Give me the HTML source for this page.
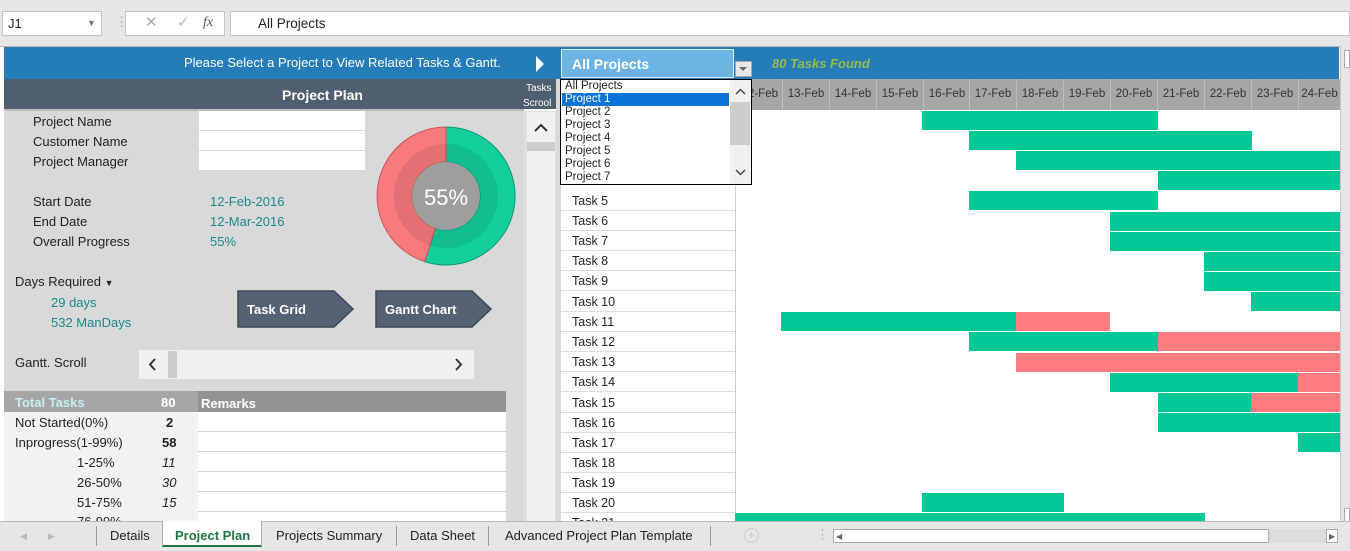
<!DOCTYPE html>
<html><head><meta charset="utf-8"><style>
*{margin:0;padding:0;box-sizing:border-box}
body{width:1350px;height:551px;overflow:hidden;background:#e6e6e6;font-family:"Liberation Sans",sans-serif;font-size:13px;color:#222;position:relative}
.a{position:absolute}
.t{position:absolute;white-space:nowrap;line-height:14px}
.row{position:absolute;left:561px;width:174px;height:20px;border-bottom:1px solid #dcdcdc;background:#fff;padding-left:11px;line-height:21px;font-size:12.5px}
.bar{position:absolute;height:19px}
.g{background:#00c896}.r{background:#ff7c80}
.dh{position:absolute;top:79px;height:31px;width:47px;border-left:1px solid #bdbdbd;line-height:31px;text-align:center;font-size:11.5px;color:#333;background:#a6a6a6}
.lbl{position:absolute;left:33px;font-size:13px}
.val{position:absolute;left:210px;color:#1a8a8a;font-size:13px}
.rm{position:absolute;left:198px;width:308px;height:20px;background:#fff;border-bottom:1px solid #d4d4d4}
.dd{position:absolute;left:5px;font-size:11.5px;line-height:13px}
</style></head><body>
<div class="a" style="left:0;top:0;width:1350px;height:46px;background:#e6e6e6"></div>
<div class="a" style="left:2px;top:11px;width:100px;height:25px;background:#fff;border:1px solid #c6c6c6"></div>
<div class="t" style="left:8px;top:17px;font-size:13px">J1</div>
<div class="t" style="left:87px;top:16px;font-size:9px;color:#777">▼</div>
<div class="t" style="left:115px;top:15px;color:#aaa">⋮</div>
<div class="a" style="left:125px;top:11px;width:100px;height:25px;background:#fff;border:1px solid #c6c6c6"></div>
<div class="t" style="left:145px;top:16px;color:#aaa;font-size:15px">✕</div>
<div class="t" style="left:177px;top:16px;color:#bbb;font-size:15px">✓</div>
<div class="t" style="left:203px;top:16px;color:#555;font-style:italic;font-family:'Liberation Serif',serif;font-size:14px">fx</div>
<div class="a" style="left:230px;top:11px;width:1120px;height:25px;background:#fff;border:1px solid #c6c6c6"></div>
<div class="t" style="left:258px;top:17px;font-size:13.5px">All Projects</div>
<div class="a" style="left:0;top:46px;width:1340px;height:475px;background:#fff;border-top:1px solid #b8b8b8"></div>
<div class="a" style="left:4px;top:47px;width:1335px;height:32px;background:#247cb8"></div>
<div class="t" style="left:184px;top:56px;color:#fff;font-size:13px">Please Select a Project to View Related Tasks &amp; Gantt.</div>
<svg class="a" style="left:535px;top:55px" width="10" height="18"><path d="M1 1L9 9L1 17Z" fill="#fff"/></svg>
<div class="a" style="left:561px;top:49px;width:173px;height:29px;background:#6cb4e4;border:1px solid #d8ecf8"></div>
<div class="t" style="left:572px;top:57px;color:#fff;font-weight:bold;font-size:14px">All Projects</div>
<div class="a" style="left:735px;top:61px;width:17px;height:16px;background:#e8e8e8;border:1px solid #aaa"></div>
<svg class="a" style="left:739px;top:67px" width="8" height="5"><path d="M0 0H8L4 4Z" fill="#666"/></svg>
<div class="t" style="left:772px;top:57px;color:#9bbb4a;font-style:italic;font-weight:bold;font-size:13px">80 Tasks Found</div>
<div class="a" style="left:4px;top:79px;width:520px;height:442px;background:#d9d9d9"></div>
<div class="a" style="left:4px;top:79px;width:552px;height:30px;background:#505f70"></div>
<div class="a" style="left:4px;top:109px;width:520px;height:2px;background:#bdbdbd"></div>
<div class="t" style="left:282px;top:88px;color:#fff;font-weight:bold;font-size:14px">Project Plan</div>
<div class="t" style="left:526px;top:82px;color:#fff;font-size:10px">Tasks</div>
<div class="t" style="left:523px;top:97px;color:#fff;font-size:10px">Scrool</div>
<div class="a" style="left:524px;top:111px;width:36px;height:410px;background:#e0e0e0"></div>
<div class="a" style="left:527px;top:112px;width:28px;height:409px;background:#f0f0f0"></div>
<svg class="a" style="left:534px;top:123px" width="14" height="9"><path d="M1 8L7 2L13 8" stroke="#333" stroke-width="2" fill="none"/></svg>
<div class="a" style="left:527px;top:142px;width:28px;height:9px;background:#cdcdcd"></div>
<div class="lbl" style="top:114px">Project Name</div>
<div class="lbl" style="top:134px">Customer Name</div>
<div class="lbl" style="top:154px">Project Manager</div>
<div class="a" style="left:199px;top:111px;width:166px;height:19px;background:#fff"></div>
<div class="a" style="left:199px;top:131px;width:166px;height:19px;background:#fff"></div>
<div class="a" style="left:199px;top:151px;width:166px;height:19px;background:#fff"></div>
<div class="lbl" style="top:194px">Start Date</div>
<div class="lbl" style="top:214px">End Date</div>
<div class="lbl" style="top:234px">Overall Progress</div>
<div class="val" style="top:194px">12-Feb-2016</div>
<div class="val" style="top:214px">12-Mar-2016</div>
<div class="val" style="top:234px">55%</div>
<div class="lbl" style="top:274px;left:15px">Days Required <span style="font-size:9px">▼</span></div>
<div class="val" style="top:295px;left:51px">29 days</div>
<div class="val" style="top:315px;left:51px">532 ManDays</div>
<div class="lbl" style="top:355px;left:15px">Gantt. Scroll</div>
<div class="a" style="left:139px;top:350px;width:335px;height:29px;background:#f0f0f0"></div>
<div class="a" style="left:168px;top:351px;width:9px;height:27px;background:#cdcdcd"></div>
<svg class="a" style="left:148px;top:358px" width="9" height="13"><path d="M7 1L2 6.5L7 12" stroke="#333" stroke-width="2" fill="none"/></svg>
<svg class="a" style="left:454px;top:358px" width="9" height="13"><path d="M2 1L7 6.5L2 12" stroke="#333" stroke-width="2" fill="none"/></svg>
<svg class="a" style="left:236px;top:289px" width="260" height="42">
<path d="M2 2H98L117 20L98 38H2Z" fill="#556274" stroke="#3e4856" stroke-width="1.5"/>
<path d="M140 2H236L255 20L236 38H140Z" fill="#556274" stroke="#3e4856" stroke-width="1.5"/>
</svg>
<div class="t" style="left:247px;top:303px;color:#fff;font-weight:bold;font-size:13px">Task Grid</div>
<div class="t" style="left:385px;top:303px;color:#fff;font-weight:bold;font-size:13px">Gantt Chart</div>
<svg class="a" style="left:0;top:0" width="560" height="300">
<path d="M446 127A69 69 0 1 1 424.7 261.6L435.5 228.3A34 34 0 1 0 446 162Z" fill="#12cf9c" stroke="#0a9a74"/>
<path d="M424.7 261.6A69 69 0 0 1 446 127L446 162A34 34 0 0 0 435.5 228.3Z" fill="#f77a7c" stroke="#c55"/>
<circle cx="446" cy="196" r="43" fill="none" stroke="#000" stroke-opacity="0.08" stroke-width="18"/>
<circle cx="446" cy="196" r="34" fill="#9e9e9e"/>
<text x="446" y="205" text-anchor="middle" fill="#fff" font-family="Liberation Sans" font-size="22">55%</text>
</svg>
<div class="a" style="left:4px;top:391px;width:194px;height:21px;background:#a6a6a6"></div>
<div class="a" style="left:198px;top:391px;width:308px;height:21px;background:#939393"></div>
<div class="t" style="left:15px;top:396px;color:#c6efef;font-weight:bold">Total Tasks</div>
<div class="t" style="left:161px;top:396px;color:#fff;font-weight:bold">80</div>
<div class="t" style="left:201px;top:397px;color:#fff;font-weight:bold">Remarks</div>
<div class="a" style="left:4px;top:412px;width:194px;height:109px;background:#f2f2f2"></div>
<div class="rm" style="top:412px"></div><div class="rm" style="top:432px"></div><div class="rm" style="top:452px"></div><div class="rm" style="top:472px"></div><div class="rm" style="top:492px"></div><div class="rm" style="top:512px"></div>
<div class="t" style="left:15px;top:416px">Not Started(0%)</div><div class="t" style="left:166px;top:416px;font-weight:bold">2</div>
<div class="t" style="left:15px;top:436px">Inprogress(1-99%)</div><div class="t" style="left:162px;top:436px;font-weight:bold">58</div>
<div class="t" style="left:77px;top:456px">1-25%</div><div class="t" style="left:162px;top:456px;font-style:italic">11</div>
<div class="t" style="left:77px;top:476px">26-50%</div><div class="t" style="left:162px;top:476px;font-style:italic">30</div>
<div class="t" style="left:77px;top:496px">51-75%</div><div class="t" style="left:162px;top:496px;font-style:italic">15</div>
<div class="t" style="left:77px;top:515px">76-99%</div>
<div class="a" style="left:556px;top:79px;width:5px;height:442px;background:#d9d9d9"></div>
<div class="a" style="left:561px;top:79px;width:175px;height:32px;background:#a6a6a6"></div>
<div class="row" style="top:191px">Task 5</div><div class="row" style="top:211px">Task 6</div><div class="row" style="top:231px">Task 7</div><div class="row" style="top:251px">Task 8</div><div class="row" style="top:271px">Task 9</div><div class="row" style="top:292px">Task 10</div><div class="row" style="top:312px">Task 11</div><div class="row" style="top:332px">Task 12</div><div class="row" style="top:352px">Task 13</div><div class="row" style="top:372px">Task 14</div><div class="row" style="top:393px">Task 15</div><div class="row" style="top:413px">Task 16</div><div class="row" style="top:433px">Task 17</div><div class="row" style="top:453px">Task 18</div><div class="row" style="top:473px">Task 19</div><div class="row" style="top:493px">Task 20</div><div class="row" style="top:513px">Task 21</div>
<div class="a" style="left:735px;top:79px;width:1px;height:442px;background:#d0d0d0"></div>
<div class="dh" style="left:735px;text-align:right;padding-right:4px">12-Feb</div>
<div class="dh" style="left:782px">13-Feb</div><div class="dh" style="left:829px">14-Feb</div><div class="dh" style="left:876px">15-Feb</div><div class="dh" style="left:923px">16-Feb</div><div class="dh" style="left:969px">17-Feb</div><div class="dh" style="left:1016px">18-Feb</div><div class="dh" style="left:1063px">19-Feb</div><div class="dh" style="left:1110px">20-Feb</div><div class="dh" style="left:1157px">21-Feb</div><div class="dh" style="left:1204px">22-Feb</div><div class="dh" style="left:1251px">23-Feb</div><div class="dh" style="left:1298px;width:42px">24-Feb</div>
<div class="bar g" style="top:111px;left:922px;width:236px"></div>
<div class="bar g" style="top:131px;left:969px;width:283px"></div>
<div class="bar g" style="top:151px;left:1016px;width:324px"></div>
<div class="bar g" style="top:171px;left:1158px;width:182px"></div>
<div class="bar g" style="top:191px;left:969px;width:189px"></div>
<div class="bar g" style="top:212px;left:1110px;width:230px"></div>
<div class="bar g" style="top:232px;left:1110px;width:230px"></div>
<div class="bar g" style="top:252px;left:1204px;width:136px"></div>
<div class="bar g" style="top:272px;left:1204px;width:136px"></div>
<div class="bar g" style="top:292px;left:1251px;width:89px"></div>
<div class="bar g" style="top:312px;left:781px;width:235px"></div><div class="bar r" style="top:312px;left:1016px;width:94px"></div>
<div class="bar g" style="top:332px;left:969px;width:189px"></div><div class="bar r" style="top:332px;left:1158px;width:182px"></div>
<div class="bar r" style="top:353px;left:1016px;width:324px"></div>
<div class="bar g" style="top:373px;left:1110px;width:188px"></div><div class="bar r" style="top:373px;left:1298px;width:42px"></div>
<div class="bar g" style="top:393px;left:1158px;width:93px"></div><div class="bar r" style="top:393px;left:1251px;width:89px"></div>
<div class="bar g" style="top:413px;left:1158px;width:182px"></div>
<div class="bar g" style="top:433px;left:1298px;width:42px"></div>
<div class="bar g" style="top:493px;left:922px;width:142px"></div>
<div class="bar g" style="top:513px;left:735px;width:470px;height:8px"></div>
<div class="a" style="left:560px;top:79px;width:192px;height:106px;background:#fff;border:1px solid #000"></div>
<div class="a" style="left:562px;top:93px;width:167px;height:13px;background:#0a74d8"></div>
<div class="dd t" style="left:565px;top:80px">All Projects</div>
<div class="dd t" style="left:565px;top:93px;color:#fff">Project 1</div>
<div class="dd t" style="left:565px;top:106px">Project 2</div>
<div class="dd t" style="left:565px;top:119px">Project 3</div>
<div class="dd t" style="left:565px;top:132px">Project 4</div>
<div class="dd t" style="left:565px;top:145px">Project 5</div>
<div class="dd t" style="left:565px;top:158px">Project 6</div>
<div class="dd t" style="left:565px;top:171px">Project 7</div>
<div class="a" style="left:730px;top:80px;width:21px;height:104px;background:#f0f0f0"></div>
<div class="a" style="left:730px;top:102px;width:20px;height:43px;background:#cdcdcd"></div>
<svg class="a" style="left:735px;top:88px" width="11" height="7"><path d="M1 6L5.5 1.5L10 6" stroke="#444" stroke-width="1.5" fill="none"/></svg>
<svg class="a" style="left:735px;top:169px" width="11" height="7"><path d="M1 1L5.5 5.5L10 1" stroke="#444" stroke-width="1.5" fill="none"/></svg>
<div class="a" style="left:1340px;top:46px;width:10px;height:475px;background:#e6e6e6;border-left:1px solid #c6c6c6"></div>
<div class="a" style="left:1344px;top:50px;width:6px;height:18px;background:#fff;border:1px solid #aaa"></div>
<div class="a" style="left:1344px;top:508px;width:6px;height:14px;background:#fff;border:1px solid #aaa"></div>
<div class="a" style="left:0;top:521px;width:1350px;height:30px;background:#e6e6e6;border-top:1px solid #b8b8b8"></div>
<div class="t" style="left:20px;top:529px;color:#bbb;font-size:9px">◀</div>
<div class="t" style="left:48px;top:529px;color:#bbb;font-size:9px">▶</div>
<div class="a" style="left:96px;top:526px;width:1px;height:20px;background:#999"></div>
<div class="t" style="left:110px;top:529px">Details</div>
<div class="a" style="left:162px;top:521px;width:100px;height:26px;background:#fff;border:1px solid #aaa;border-top:none;border-bottom:2px solid #217346"></div>
<div class="t" style="left:175px;top:529px;color:#217346;font-weight:bold">Project Plan</div>
<div class="t" style="left:276px;top:529px">Projects Summary</div>
<div class="a" style="left:396px;top:526px;width:1px;height:20px;background:#999"></div>
<div class="t" style="left:410px;top:529px">Data Sheet</div>
<div class="a" style="left:488px;top:526px;width:1px;height:20px;background:#999"></div>
<div class="t" style="left:505px;top:529px">Advanced Project Plan Template</div>
<div class="a" style="left:710px;top:526px;width:1px;height:20px;background:#999"></div>
<div class="a" style="left:744px;top:528px;width:15px;height:15px;border:1px solid #ccc;border-radius:50%;color:#ccc;font-size:13px;line-height:12px;text-align:center">+</div>
<div class="t" style="left:816px;top:528px;color:#aaa">⋮</div>
<div class="a" style="left:833px;top:529px;width:436px;height:14px;background:#fff;border:1px solid #aaa"></div>
<div class="a" style="left:1269px;top:529px;width:57px;height:14px;background:#ddd"></div>
<div class="a" style="left:1326px;top:529px;width:12px;height:14px;background:#fff;border:1px solid #aaa"></div>
<div class="t" style="left:836px;top:530px;font-size:8px;color:#666">◀</div>
<div class="t" style="left:1329px;top:530px;font-size:8px;color:#666">▶</div>
</body></html>
